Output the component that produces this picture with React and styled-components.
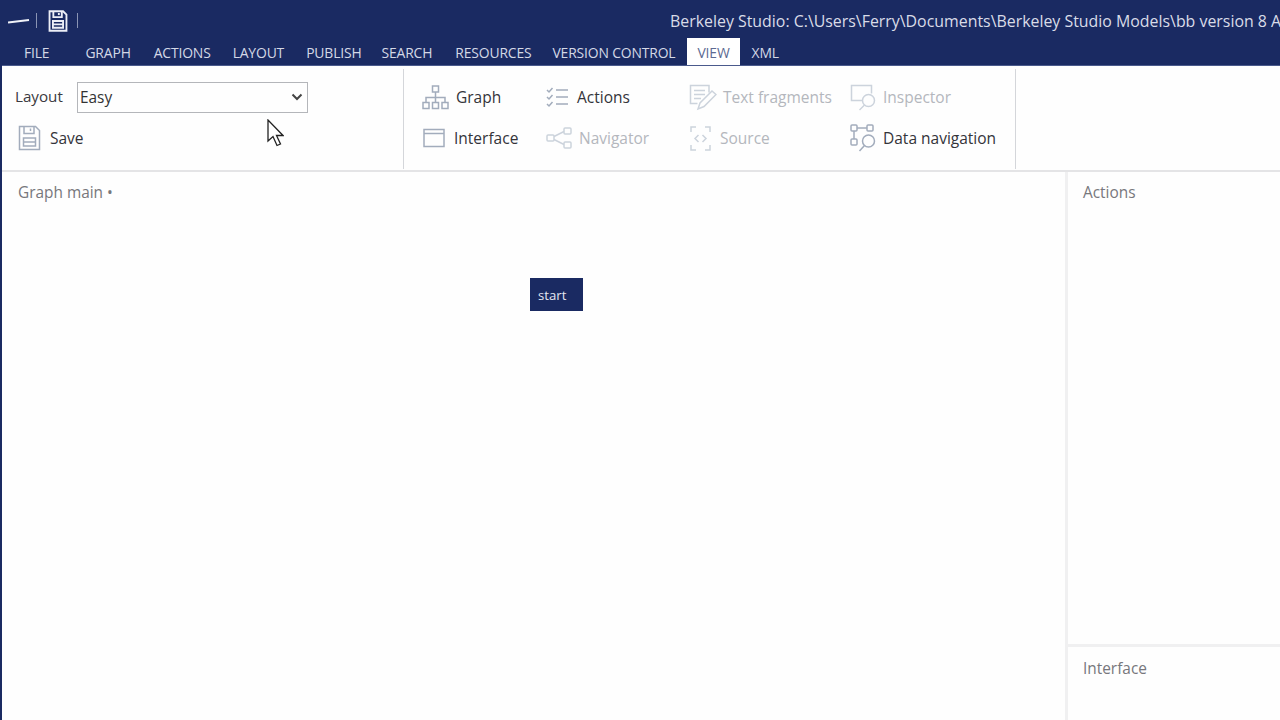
import React from "react";
import styled, { createGlobalStyle } from "styled-components";

const navy = "#1a2a62";

const GlobalStyle = createGlobalStyle`
  html, body {
    margin: 0;
    padding: 0;
    height: 100%;
    overflow: hidden;
    background: #fff;
  }
  #root {
    height: 100%;
  }
`;

const Page = styled.div`
  position: relative;
  width: 1280px;
  height: 720px;
  overflow: hidden;
  display: flex;
  flex-direction: column;
  box-sizing: border-box;
  border-left: 2px solid ${navy};
  background: #fefefe;
  font-family: "Open Sans", "Noto Sans", "Liberation Sans", sans-serif;
`;

const Header = styled.header`
  height: 66px;
  margin-left: -2px;
  flex: none;
  background: ${navy};
  border-bottom: 1px solid #4a5a8c;
  box-sizing: border-box;
  display: flex;
  flex-direction: column;
`;

const TitleBar = styled.div`
  height: 38px;
  flex: none;
  display: flex;
  align-items: center;
  padding: 3px 0 0 8px;
  box-sizing: border-box;
`;

const QuickTools = styled.div`
  width: 662px;
  flex: none;
  display: flex;
  align-items: center;
`;

const Tick = styled.span`
  width: 1px;
  height: 15px;
  background: #8a94b4;
  margin: ${(p) => p.$margin};
`;

const Title = styled.div`
  color: #d9dce8;
  font-size: 15.9px;
  white-space: nowrap;
`;

const Tabs = styled.nav`
  height: 27px;
  display: flex;
  align-items: stretch;
  padding-left: 24px;
`;

const Tab = styled.div`
  display: flex;
  align-items: center;
  padding: 2px ${(p) => (p.$active ? 10 : 0)}px 0;
  margin-right: ${(p) => p.$after}px;
  font-size: 13.9px;
  letter-spacing: -0.15px;
  white-space: nowrap;
  color: ${(p) => (p.$active ? "#5c6a92" : "#d4d8e6")};
  background: ${(p) => (p.$active ? "#fff" : "transparent")};
`;

const Ribbon = styled.section`
  height: 106px;
  flex: none;
  display: flex;
  padding-top: 3px;
  box-sizing: border-box;
  border-bottom: 2px solid #e4e4e6;
`;

const Group = styled.div`
  width: ${(p) => p.$width}px;
  height: 100px;
  flex: none;
  box-sizing: border-box;
  border-right: 1px solid #d4d6da;
  padding: ${(p) => p.$padding};
`;

const ToolGrid = styled.div`
  display: grid;
  grid-template-columns: 124px 143px 161px 1fr;
  grid-template-rows: 40px 40px;
  row-gap: 1px;
`;

const Row = styled.div`
  display: flex;
  align-items: center;
  height: 40px;
  margin-bottom: 1px;
`;

const LayoutLabel = styled.span`
  font-size: 15.2px;
  color: #3a3a3e;
  width: 62px;
  margin-top: -2px;
`;

const SelectBox = styled.div`
  width: 231px;
  height: 31px;
  box-sizing: border-box;
  border: 1px solid #b4b6ba;
  display: flex;
  align-items: center;
  justify-content: space-between;
  padding: 0 4px 0 2px;
  font-size: 15.4px;
  color: #333;
`;

const Tool = styled.div`
  display: flex;
  align-items: center;
  height: 40px;
  gap: ${(p) => p.$gap}px;
  margin-left: ${(p) => p.$inset || 0}px;
  font-size: 15.5px;
  white-space: nowrap;
  color: ${(p) => (p.$off ? "#b4b7bd" : "#34343a")};
  svg {
    flex: none;
    fill: none;
    stroke: ${(p) => (p.$off ? "#ccd3dc" : "#a2acbc")};
    stroke-width: 1.5;
  }
`;

const Workspace = styled.main`
  flex: 1;
  display: flex;
  min-height: 0;
`;

const Canvas = styled.div`
  position: relative;
  width: 1063px;
  flex: none;
  box-sizing: border-box;
  padding: 11px 16px;
`;

const Side = styled.aside`
  flex: 1;
  display: flex;
  flex-direction: column;
  border-left: 3px solid #f0f0f1;
`;

const SidePanel = styled.div`
  height: ${(p) => p.$height}px;
  flex: ${(p) => (p.$height ? "none" : "1")};
  box-sizing: border-box;
  padding: ${(p) => (p.$height ? "11px" : "12px")} 15px;
  border-bottom: ${(p) => (p.$height ? "3px solid #f0f0f1" : "none")};
`;

const PanelTitle = styled.div`
  font-size: 15.4px;
  line-height: 20px;
  color: #77777c;
`;

const StartNode = styled.div`
  position: absolute;
  left: 528px;
  top: 106px;
  width: 53px;
  height: 33px;
  box-sizing: border-box;
  padding: 0 0 0 8px;
  display: flex;
  align-items: center;
  background: ${navy};
  color: #e4e6f0;
  font-size: 13.2px;
  font-weight: 500;
`;

const Pointer = styled.svg`
  position: absolute;
  left: 265px;
  top: 119px;
`;

const TABS = [
  ["FILE", 36],
  ["GRAPH", 23],
  ["ACTIONS", 22],
  ["LAYOUT", 22],
  ["PUBLISH", 20],
  ["SEARCH", 23],
  ["RESOURCES", 21],
  ["VERSION CONTROL", 12],
];

const SaveIcon = ({ width = 23, height = 26, stroke, strokeWidth }) => (
  <svg width={width} height={height} viewBox="0 0 23 26" style={stroke ? { fill: "none", stroke, strokeWidth } : undefined}>
    <path d="M1.500 1.500h16l4 4v19h-20z" />
    <path d="M6 1.500v7h10v-7" />
    <path d="M12.500 3.500v2.500" />
    <path d="M5.500 13h12v8h-12zM5.500 17h12" />
  </svg>
);

const GraphIcon = () => (
  <svg width="27" height="25" viewBox="0 0 27 25">
    <rect x="10.500" y="1" width="6" height="6" />
    <rect x="1" y="17.500" width="6" height="6" />
    <rect x="10.500" y="17.500" width="6" height="6" />
    <rect x="20" y="17.500" width="6" height="6" />
    <path d="M13.500 7v10.500M4 17.500v-5h19v5" />
  </svg>
);

const ActionsIcon = () => (
  <svg width="23" height="22" viewBox="0 0 23 22">
    <path d="M1 4l2 2 3.500-4M1 11l2 2 3.500-4M1 18l2 2 3.500-4" />
    <path d="M10 4h12M10 11h12M10 18h12" />
  </svg>
);

const WindowIcon = () => (
  <svg width="22" height="20" viewBox="0 0 22 20">
    <rect x="1" y="1.500" width="20" height="17" />
    <path d="M1 5.500h20" />
  </svg>
);

const NavigatorIcon = () => (
  <svg width="26" height="22" viewBox="0 0 26 22">
    <rect x="1" y="8" width="7" height="6" rx="1" />
    <rect x="18" y="1" width="7" height="6" rx="1" />
    <rect x="18" y="15" width="7" height="6" rx="1" />
    <path d="M8 9.500l10-5M8 12.500l10 5" />
  </svg>
);

const FragmentIcon = () => (
  <svg width="28" height="27" viewBox="0 0 28 27">
    <path d="M20 8.500V1.500H1.500v18h7" />
    <path d="M5 6.500h11M5 10.500h11M5 14.500h7" />
    <path d="M9 25l2-6L23 7l4 3.500L15 22.500z" />
  </svg>
);

const SourceIcon = () => (
  <svg width="21" height="25" viewBox="0 0 21 25">
    <path d="M1 6V1h5M15 1h5v5M20 19v5h-5M6 24H1v-5" />
    <path d="M8.500 9l-3.500 3.500 3.500 3.500M12.500 9l3.500 3.500-3.500 3.500" />
  </svg>
);

const InspectorIcon = () => (
  <svg width="26" height="27" viewBox="0 0 26 27">
    <path d="M12 16.500H1.500V1.500h20v8" />
    <circle cx="18.500" cy="16.500" r="6" />
    <path d="M14.500 21l-5 5" />
  </svg>
);

const DataNavIcon = () => (
  <svg width="26" height="28" viewBox="0 0 26 28">
    <rect x="1" y="1" width="6" height="6" rx="1" />
    <rect x="17" y="1" width="6" height="6" rx="1" />
    <rect x="1" y="15" width="6" height="6" rx="1" />
    <path d="M7 4h10M4 7v8" />
    <circle cx="18.500" cy="17" r="6" />
    <path d="M14.500 21.500l-5 5.500" />
  </svg>
);

export default function App() {
  return (
    <Page>
      <GlobalStyle />
      <Header>
        <TitleBar>
          <QuickTools>
            <svg width="22" height="6" viewBox="0 0 22 6">
              <path d="M0 4.500L21 2" stroke="#f0f2f8" strokeWidth="2.200" fill="none" />
            </svg>
            <Tick $margin="0 11px 0 6px" />
            <SaveIcon width={20} height={22} stroke="#eceef6" strokeWidth={2.200} />
            <Tick $margin="0 0 0 9px" />
          </QuickTools>
          <Title>Berkeley Studio: C:\Users\Ferry\Documents\Berkeley Studio Models\bb version 8 A</Title>
        </TitleBar>
        <Tabs>
          {TABS.map(([label, after]) => (
            <Tab key={label} $after={after}>{label}</Tab>
          ))}
          <Tab $after={12} $active>VIEW</Tab>
          <Tab $after={0}>XML</Tab>
        </Tabs>
      </Header>

      <Ribbon>
        <Group $width={402} $padding="8px 0 0 13px">
          <Row>
            <LayoutLabel>Layout</LayoutLabel>
            <SelectBox>
              Easy
              <svg width="12" height="8" viewBox="0 0 12 8">
                <path d="M1.500 1.500L6 6l4.500-4.500" stroke="#444" strokeWidth="2" fill="none" />
              </svg>
            </SelectBox>
          </Row>
          <Tool $gap={9} $inset={3}>
            <SaveIcon />
            Save
          </Tool>
        </Group>
        <Group $width={612} $padding="8px 0 0 18px">
          <ToolGrid>
            <Tool $gap={7}><GraphIcon />Graph</Tool>
            <Tool $gap={8}><ActionsIcon />Actions</Tool>
            <Tool $gap={6} $off><FragmentIcon />Text fragments</Tool>
            <Tool $gap={7} $off><InspectorIcon />Inspector</Tool>
            <Tool $gap={9} $inset={1}><WindowIcon />Interface</Tool>
            <Tool $gap={7} $off><NavigatorIcon />Navigator</Tool>
            <Tool $gap={9} $inset={1} $off><SourceIcon />Source</Tool>
            <Tool $gap={7}><DataNavIcon />Data navigation</Tool>
          </ToolGrid>
        </Group>
      </Ribbon>

      <Workspace>
        <Canvas>
          <PanelTitle>Graph main •</PanelTitle>
          <StartNode>start</StartNode>
        </Canvas>
        <Side>
          <SidePanel $height={475}>
            <PanelTitle>Actions</PanelTitle>
          </SidePanel>
          <SidePanel>
            <PanelTitle>Interface</PanelTitle>
          </SidePanel>
        </Side>
      </Workspace>

      <Pointer width="17" height="28" viewBox="0 0 17 28">
        <path d="M1 1v21l5-4.500 4 9 3.500-1.500-4-8.500h6.500z" fill="#fff" stroke="#222" strokeWidth="1.300" />
      </Pointer>
    </Page>
  );
}
